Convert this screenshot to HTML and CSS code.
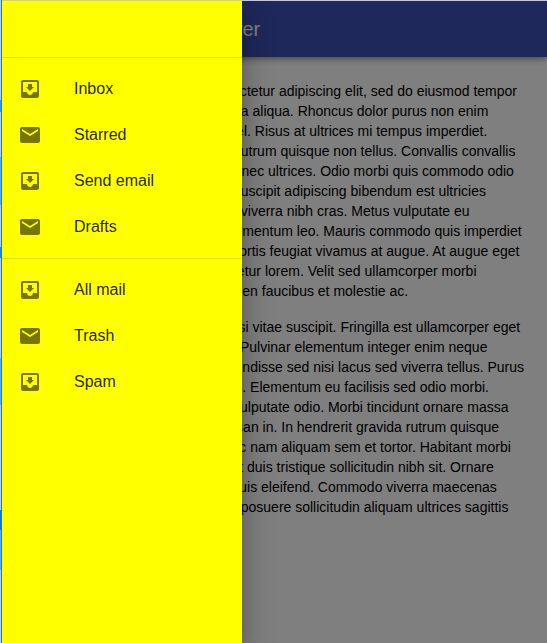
FILE: index.html
```html
<!DOCTYPE html>
<html lang="en">
<head>
    <meta charset="UTF-8">
    <meta name="viewport" content="width=device-width, initial-scale=1.0">
    <title>Responsive drawer</title>
    <link rel="stylesheet" href="styles.css">
</head>
<body>
    <div class="edge-strip"></div>
    <div class="stage">
        <header class="app-bar">
            <h1 class="app-title">Responsive drawer</h1>
        </header>
        <main class="content">
            <p>Lorem ipsum dolor sit amet, consectetur adipiscing elit, sed do eiusmod tempor incididunt ut labore et dolore magna aliqua. Rhoncus dolor purus non enim praesent elementum facilisis leo vel. Risus at ultrices mi tempus imperdiet. Semper risus in hendrerit gravida rutrum quisque non tellus. Convallis convallis tellus id interdum velit laoreet id donec ultrices. Odio morbi quis commodo odio aenean sed adipiscing. Amet nisl suscipit adipiscing bibendum est ultricies integer quis. Cursus euismod quis viverra nibh cras. Metus vulputate eu scelerisque felis imperdiet proin fermentum leo. Mauris commodo quis imperdiet massa tincidunt. Cras tincidunt lobortis feugiat vivamus at augue. At augue eget arcu dictum varius duis at consectetur lorem. Velit sed ullamcorper morbi tincidunt. Lorem donec massa sapien faucibus et molestie ac.</p>
            <p>Consequat mauris nunc congue nisi vitae suscipit. Fringilla est ullamcorper eget nulla facilisi etiam dignissim diam. Pulvinar elementum integer enim neque volutpat ac tincidunt. Ornare suspendisse sed nisi lacus sed viverra tellus. Purus sit amet volutpat consequat mauris. Elementum eu facilisis sed odio morbi. Euismod lacinia at quis risus sed vulputate odio. Morbi tincidunt ornare massa eget egestas purus viverra accumsan in. In hendrerit gravida rutrum quisque non tellus orci ac. Pellentesque nec nam aliquam sem et tortor. Habitant morbi tristique senectus et. Adipiscing elit duis tristique sollicitudin nibh sit. Ornare aenean euismod elementum nisi quis eleifend. Commodo viverra maecenas accumsan lacus vel facilisis. Nulla posuere sollicitudin aliquam ultrices sagittis</p>
        </main>

        <div class="backdrop"></div>

        <nav class="drawer">
            <div class="drawer-head"></div>
            <ul class="nav-list">
                <li class="nav-item">
                    <svg class="nav-icon" viewBox="0 0 24 24"><path d="M19 3H4.99c-1.11 0-1.98.89-1.98 2L3 19c0 1.1.88 2 1.99 2H19c1.1 0 2-.9 2-2V5c0-1.11-.9-2-2-2zm0 12h-4c0 1.66-1.35 3-3 3s-3-1.34-3-3H4.99V5H19v10zm-3-5h-2V7h-4v3H8l4 4 4-4z"/></svg>
                    <span>Inbox</span>
                </li>
                <li class="nav-item">
                    <svg class="nav-icon" viewBox="0 0 24 24"><path d="M20 4H4c-1.1 0-1.99.9-1.99 2L2 18c0 1.1.9 2 2 2h16c1.1 0 2-.9 2-2V6c0-1.1-.9-2-2-2zm0 4l-8 5-8-5V6l8 5 8-5v2z"/></svg>
                    <span>Starred</span>
                </li>
                <li class="nav-item">
                    <svg class="nav-icon" viewBox="0 0 24 24"><path d="M19 3H4.99c-1.11 0-1.98.89-1.98 2L3 19c0 1.1.88 2 1.99 2H19c1.1 0 2-.9 2-2V5c0-1.11-.9-2-2-2zm0 12h-4c0 1.66-1.35 3-3 3s-3-1.34-3-3H4.99V5H19v10zm-3-5h-2V7h-4v3H8l4 4 4-4z"/></svg>
                    <span>Send email</span>
                </li>
                <li class="nav-item">
                    <svg class="nav-icon" viewBox="0 0 24 24"><path d="M20 4H4c-1.1 0-1.99.9-1.99 2L2 18c0 1.1.9 2 2 2h16c1.1 0 2-.9 2-2V6c0-1.1-.9-2-2-2zm0 4l-8 5-8-5V6l8 5 8-5v2z"/></svg>
                    <span>Drafts</span>
                </li>
            </ul>
            <ul class="nav-list">
                <li class="nav-item">
                    <svg class="nav-icon" viewBox="0 0 24 24"><path d="M19 3H4.99c-1.11 0-1.98.89-1.98 2L3 19c0 1.1.88 2 1.99 2H19c1.1 0 2-.9 2-2V5c0-1.11-.9-2-2-2zm0 12h-4c0 1.66-1.35 3-3 3s-3-1.34-3-3H4.99V5H19v10zm-3-5h-2V7h-4v3H8l4 4 4-4z"/></svg>
                    <span>All mail</span>
                </li>
                <li class="nav-item">
                    <svg class="nav-icon" viewBox="0 0 24 24"><path d="M20 4H4c-1.1 0-1.99.9-1.99 2L2 18c0 1.1.9 2 2 2h16c1.1 0 2-.9 2-2V6c0-1.1-.9-2-2-2zm0 4l-8 5-8-5V6l8 5 8-5v2z"/></svg>
                    <span>Trash</span>
                </li>
                <li class="nav-item">
                    <svg class="nav-icon" viewBox="0 0 24 24"><path d="M19 3H4.99c-1.11 0-1.98.89-1.98 2L3 19c0 1.1.88 2 1.99 2H19c1.1 0 2-.9 2-2V5c0-1.11-.9-2-2-2zm0 12h-4c0 1.66-1.35 3-3 3s-3-1.34-3-3H4.99V5H19v10zm-3-5h-2V7h-4v3H8l4 4 4-4z"/></svg>
                    <span>Spam</span>
                </li>
            </ul>
        </nav>
    </div>
</body>
</html>
```

FILE: styles.css
```css
html, body {
    height: 100%;
}
body {
    display: flex;
    margin: 0;
    overflow: hidden;
    font-family: "Liberation Sans", Arial, sans-serif;
    background-color: #fff;
}
.edge-strip {
    flex: none;
    width: 1px;
    border-right: 1px solid #1e78d6;
    background: linear-gradient(#c8c8c8 0, #c8c8c8 100px, #2a9fd6 100px, #2a9fd6 112px, #c8c8c8 112px, #c8c8c8 157px, #5ab0dc 157px, #5ab0dc 205px, #c8c8c8 205px, #c8c8c8 247px, #0a8fd0 247px, #0a8fd0 258px, #c8c8c8 258px, #c8c8c8 358px, #5ab0dc 358px, #5ab0dc 405px, #c8c8c8 405px, #c8c8c8 510px, #0a7fc0 510px, #0a7fc0 530px, #5ab0dc 530px, #5ab0dc 570px, #c8c8c8 570px);
}
.stage {
    position: relative;
    flex: 1;
    min-width: 0;
    border-top: 1px solid #c8c8c8;
    overflow: hidden;
}
.app-bar {
    display: flex;
    align-items: center;
    height: 56px;
    padding-left: 87px;
    background-color: #3f51b5;
    color: #fff;
    box-shadow: 0 2px 4px -1px rgba(0, 0, 0, 0.2), 0 4px 5px 0 rgba(0, 0, 0, 0.14), 0 1px 10px 0 rgba(0, 0, 0, 0.12);
}
.app-title {
    margin: 0;
    font-size: 20px;
    font-weight: 500;
    white-space: nowrap;
}
.content {
    padding: 24px 22px 24px 24px;
    font-size: 14px;
    line-height: 20px;
    color: #000;
}
.content p {
    margin: 0 0 16px;
}
.backdrop {
    position: absolute;
    inset: 0;
    background-color: rgba(0, 0, 0, 0.5);
}
.drawer {
    position: absolute;
    top: 0;
    bottom: 0;
    left: 0;
    width: 240px;
    background-color: #ff0;
    box-shadow: 0 8px 10px -5px rgba(0, 0, 0, 0.2), 0 16px 24px 2px rgba(0, 0, 0, 0.14), 0 6px 30px 5px rgba(0, 0, 0, 0.12);
}
.drawer-head {
    height: 56px;
}
.nav-list {
    margin: 0;
    padding: 8px 0;
    list-style: none;
    border-top: 1px solid rgba(0, 0, 0, 0.12);
}
.nav-item {
    display: flex;
    align-items: center;
    height: 46px;
    padding-left: 16px;
    font-size: 16px;
    color: rgba(0, 0, 0, 0.87);
}
.nav-icon {
    flex: none;
    width: 24px;
    height: 24px;
    margin-right: 32px;
    fill: rgba(0, 0, 0, 0.54);
}
```
